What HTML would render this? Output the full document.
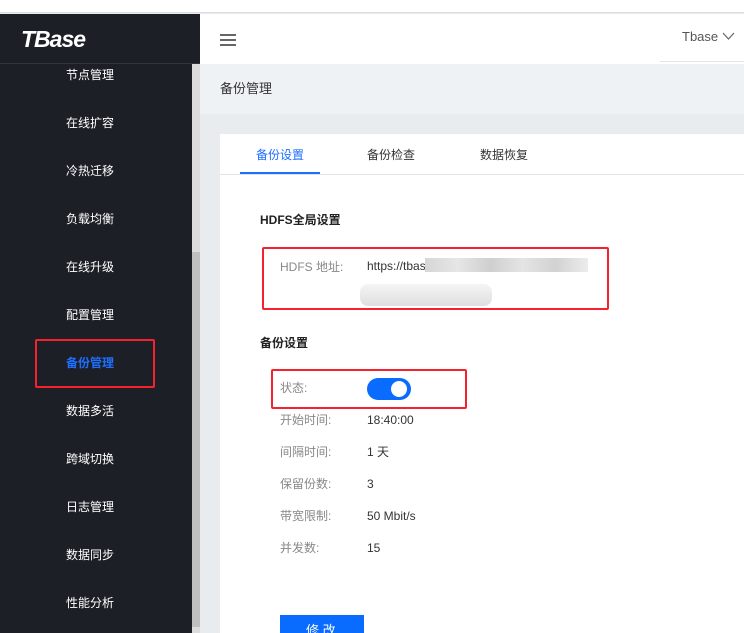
<!DOCTYPE html>
<html style="overflow:hidden;height:633px"><head><meta charset="utf-8"><style>
*{margin:0;padding:0;box-sizing:border-box}
body{width:744px;height:633px;overflow:hidden;position:relative;background:#e8ecef;font-family:"Liberation Sans","Noto Sans CJK SC",sans-serif;font-size:12px;line-height:16px}
.abs{position:absolute}
.topbar{left:0;top:0;width:744px;height:13px;background:#fff;border-bottom:1px solid #ddd}
.side{left:0;top:14px;width:192px;height:619px;background:#1c1f26}
.logo{left:0;top:14px;width:200px;height:50px;background:#1c1f26;border-bottom:1px solid #33363d}
.item{position:absolute;left:66px;color:#fff;font-size:12px;line-height:16px}
.sb{left:192px;top:64px;width:8px;height:569px;background:#dcdcdc}
.thumb{left:192px;top:252px;width:8px;height:375px;background:#bfbfbf}
.header{left:200px;top:14px;width:544px;height:50px;background:#fff}
.crumb{left:200px;top:64px;width:544px;height:50px;background:#eff2f5;color:#333;font-size:13px;padding:17px 0 0 20px}
.card{left:220px;top:134px;width:524px;height:499px;background:#fff;overflow:hidden}
.lbl{color:#888;font-size:12px;line-height:16px}
.val{color:#333;font-size:12px;line-height:16px}
.red{border:2px solid #f5222d;border-radius:2px}
</style></head><body>
<div class="abs topbar"></div>
<div class="abs side"></div>
<div class="abs logo"><span style="position:absolute;left:21px;top:11px;color:#fff;font-size:23px;font-weight:bold;font-style:italic;letter-spacing:-1px;line-height:28px">TBase</span></div>
<div class="item" style="top:67px">节点管理</div>
<div class="item" style="top:115px">在线扩容</div>
<div class="item" style="top:163px">冷热迁移</div>
<div class="item" style="top:211px">负载均衡</div>
<div class="item" style="top:259px">在线升级</div>
<div class="item" style="top:307px">配置管理</div>
<div class="item" style="top:355px;color:#1e6fff;font-weight:bold">备份管理</div>
<div class="item" style="top:403px">数据多活</div>
<div class="item" style="top:451px">跨域切换</div>
<div class="item" style="top:499px">日志管理</div>
<div class="item" style="top:547px">数据同步</div>
<div class="item" style="top:595px">性能分析</div>
<div class="abs red" style="left:35px;top:339px;width:120px;height:49px"></div>
<div class="abs sb"></div><div class="abs thumb"></div>
<div class="abs header">
 <div class="abs" style="left:20px;top:20px;width:16px;height:2px;background:#666;box-shadow:0 5px 0 #666,0 10px 0 #666"></div>
 <div class="abs" style="left:482px;top:15px;color:#555;font-size:13px">Tbase</div>
 <svg class="abs" style="left:522px;top:17px" width="13" height="10"><path d="M1 2l5.5 6 5.5-6" fill="none" stroke="#666" stroke-width="1.2"/></svg>
 <div class="abs" style="left:460px;top:47px;width:84px;height:1px;background:#e5e5e5"></div>
</div>
<div class="abs crumb">备份管理</div>
<div class="abs card">
 <div class="abs" style="left:0;top:40px;width:524px;height:1px;background:#e2e2e2"></div>
 <div class="abs" style="left:36px;top:13px;color:#1e6fff;font-size:12px">备份设置</div>
 <div class="abs" style="left:20px;top:38px;width:80px;height:2px;background:#1e6fff"></div>
 <div class="abs" style="left:147px;top:13px;color:#333">备份检查</div>
 <div class="abs" style="left:260px;top:13px;color:#333">数据恢复</div>
 <div class="abs" style="left:40px;top:78px;color:#222;font-weight:bold">HDFS全局设置</div>
 <div class="abs red" style="left:42px;top:113px;width:347px;height:63px"></div>
 <div class="abs lbl" style="left:60px;top:125px">HDFS 地址:</div>
 <div class="abs val" style="left:147px;top:124px">https://tbas</div>
 <div class="abs" style="left:205px;top:124px;width:163px;height:14px;background:linear-gradient(90deg,#d6d6d6,#e6e6e6,#cfcfcf,#e4e4e4,#d2d2d2,#ececec)"></div>
 <div class="abs" style="left:140px;top:150px;width:132px;height:22px;border-radius:8px;background:linear-gradient(#f5f5f5,#dedede)"></div>
 <div class="abs" style="left:40px;top:201px;color:#222;font-weight:bold">备份设置</div>
 <div class="abs red" style="left:51px;top:235px;width:196px;height:40px"></div>
 <div class="abs lbl" style="left:60px;top:246px">状态:</div>
 <div class="abs" style="left:147px;top:244px;width:44px;height:22px;border-radius:11px;background:#0a6cff"><div class="abs" style="left:24px;top:3px;width:16px;height:16px;border-radius:8px;background:#fff"></div></div>
 <div class="abs lbl" style="left:60px;top:278px">开始时间:</div><div class="abs val" style="left:147px;top:278px">18:40:00</div>
 <div class="abs lbl" style="left:60px;top:310px">间隔时间:</div><div class="abs val" style="left:147px;top:310px">1 天</div>
 <div class="abs lbl" style="left:60px;top:342px">保留份数:</div><div class="abs val" style="left:147px;top:342px">3</div>
 <div class="abs lbl" style="left:60px;top:374px">带宽限制:</div><div class="abs val" style="left:147px;top:374px">50 Mbit/s</div>
 <div class="abs lbl" style="left:60px;top:406px">并发数:</div><div class="abs val" style="left:147px;top:406px">15</div>
 <div class="abs" style="left:60px;top:481px;width:84px;height:18px;background:#0a6cff;color:#fff;font-size:13px;padding:8px 0 0 26px;overflow:hidden;line-height:16px">修 改</div>
</div>
</body></html>
